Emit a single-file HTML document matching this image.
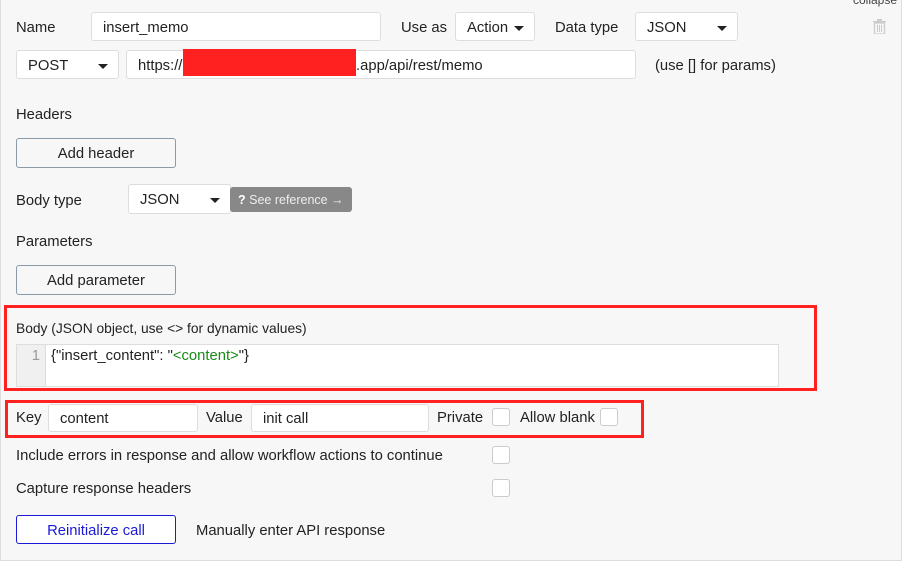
<!DOCTYPE html>
<html><head><style>
*{box-sizing:border-box;margin:0;padding:0}
body{width:916px;height:563px;background:#fff;font-family:"Liberation Sans","DejaVu Sans",sans-serif;font-size:14.8px;color:#222;position:relative;overflow:hidden}
#p{position:absolute;left:0;top:-2px;width:902px;height:563px;background:#f7f7f7;border-right:1px solid #ddd;border-bottom:1px solid #ddd;border-left:1px solid #ddd}
.a{position:absolute;white-space:nowrap}
.t{line-height:19px}
.in{position:absolute;background:#fff;border:1px solid #ddd;border-radius:3px;padding-left:11px;padding-top:2px;display:flex;align-items:center}
.car{position:absolute;right:10px;top:50%;margin-top:-1px;border-left:5px solid transparent;border-right:5px solid transparent;border-top:5px solid #222}
.btn{position:absolute;border:1px solid #8a9aa6;border-radius:3px;background:#f7f7f7;display:flex;align-items:center;justify-content:center;padding-top:2px}
.cb{position:absolute;width:18px;height:18px;background:#fff;border:1px solid #ccc;border-radius:3px}
.red{position:absolute;border:3px solid #ff2020}
</style></head><body>
<div id="p"></div>
<div class="a" style="left:853px;top:-8px;font-size:12px;color:#444;line-height:16px">collapse</div>
<svg class="a" style="left:873px;top:19px" width="13" height="15" viewBox="0 0 13 15"><rect x="0" y="2" width="13" height="1.5" fill="#ccc"/><rect x="4" y="0" width="5" height="2" fill="#ccc"/><rect x="1.5" y="4" width="10" height="11" rx="1" fill="none" stroke="#ccc" stroke-width="1.3"/><path d="M4.5 6v7M6.5 6v7M8.5 6v7" stroke="#ccc" stroke-width="1"/></svg>

<div class="a t" style="left:16px;top:19px">Name</div>
<div class="in" style="left:91px;top:12px;width:290px;height:29px">insert_memo</div>
<div class="a t" style="left:401px;top:19px">Use as</div>
<div class="in" style="left:455px;top:12px;width:80px;height:29px">Action<span class="car"></span></div>
<div class="a t" style="left:555px;top:19px">Data type</div>
<div class="in" style="left:635px;top:12px;width:103px;height:29px">JSON<span class="car"></span></div>

<div class="in" style="left:16px;top:50px;width:103px;height:29px">POST<span class="car"></span></div>
<div class="in" style="left:126px;top:50px;width:510px;height:29px">https://</div>
<div class="a" style="left:183px;top:49px;width:173px;height:27px;background:#ff2020"></div>
<div class="a t" style="left:356px;top:57px">.app/api/rest/memo</div>
<div class="a t" style="left:655px;top:57px">(use [] for params)</div>

<div class="a t" style="left:16px;top:106px">Headers</div>
<div class="btn" style="left:16px;top:138px;width:160px;height:30px">Add header</div>

<div class="a t" style="left:16px;top:192px">Body type</div>
<div class="in" style="left:128px;top:184px;width:103px;height:30px">JSON<span class="car"></span></div>
<div class="a" style="left:230px;top:187px;width:122px;height:25px;background:#888;border-radius:3px;color:#eee;font-size:12.5px;line-height:26px;padding-left:8px"><b style="color:#fff">?</b> See reference →</div>

<div class="a t" style="left:16px;top:233px">Parameters</div>
<div class="btn" style="left:16px;top:265px;width:160px;height:30px">Add parameter</div>

<div class="red" style="left:4px;top:305px;width:813px;height:86px"></div>
<div class="a t" style="left:16px;top:319px;font-size:13.8px">Body (JSON object, use &lt;&gt; for dynamic values)</div>
<div class="a" style="left:16px;top:344px;width:763px;height:43px;background:#fff;border:1px solid #ddd"></div>
<div class="a" style="left:17px;top:345px;width:29px;height:41px;background:#f0f0f0;border-right:1px solid #ddd;text-align:right;padding-right:5px;color:#999;line-height:22px">1</div>
<div class="a" style="left:51px;top:345px;line-height:22px">{"insert_content": "<span style="color:#1a8a1a">&lt;content&gt;</span>"}</div>

<div class="red" style="left:5px;top:400px;width:639px;height:38px"></div>
<div class="a t" style="left:16px;top:409px">Key</div>
<div class="in" style="left:48px;top:404px;width:150px;height:28px">content</div>
<div class="a t" style="left:206px;top:409px">Value</div>
<div class="in" style="left:251px;top:404px;width:178px;height:28px">init call</div>
<div class="a t" style="left:437px;top:409px">Private</div>
<div class="cb" style="left:492px;top:408px"></div>
<div class="a t" style="left:520px;top:409px">Allow blank</div>
<div class="cb" style="left:600px;top:408px"></div>

<div class="a t" style="left:16px;top:447px">Include errors in response and allow workflow actions to continue</div>
<div class="cb" style="left:492px;top:446px"></div>
<div class="a t" style="left:16px;top:480px">Capture response headers</div>
<div class="cb" style="left:492px;top:479px"></div>

<div class="btn" style="left:16px;top:515px;width:160px;height:29px;border-color:#1a1ad8;background:#fff;color:#1a1ad8">Reinitialize call</div>
<div class="a t" style="left:196px;top:522px">Manually enter API response</div>
</body></html>
